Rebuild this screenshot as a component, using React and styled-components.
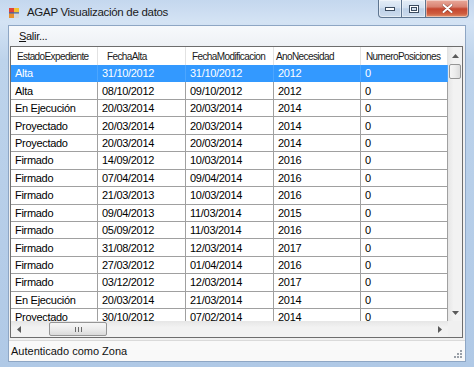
import styled, { createGlobalStyle } from "styled-components";

const GlobalStyle = createGlobalStyle`
  html, body { margin: 0; padding: 0; }
  body { background: #fff; font-family: "Liberation Sans", Arial, sans-serif; }
`;

const COLS = "87px 88px 88px 87px 1fr";

const columns = [
  { title: "EstadoExpediente", pad: 6 },
  { title: "FechaAlta", pad: 9 },
  { title: "FechaModificacion", pad: 6 },
  { title: "AnoNecesidad", pad: 2 },
  { title: "NumeroPosiciones", pad: 5 },
];

const rows = [
  ["Alta", "31/10/2012", "31/10/2012", "2012", "0"],
  ["Alta", "08/10/2012", "09/10/2012", "2012", "0"],
  ["En Ejecución", "20/03/2014", "20/03/2014", "2014", "0"],
  ["Proyectado", "20/03/2014", "20/03/2014", "2014", "0"],
  ["Proyectado", "20/03/2014", "20/03/2014", "2014", "0"],
  ["Firmado", "14/09/2012", "10/03/2014", "2016", "0"],
  ["Firmado", "07/04/2014", "09/04/2014", "2016", "0"],
  ["Firmado", "21/03/2013", "10/03/2014", "2016", "0"],
  ["Firmado", "09/04/2013", "11/03/2014", "2015", "0"],
  ["Firmado", "05/09/2012", "11/03/2014", "2016", "0"],
  ["Firmado", "31/08/2012", "12/03/2014", "2017", "0"],
  ["Firmado", "27/03/2012", "01/04/2014", "2016", "0"],
  ["Firmado", "03/12/2012", "12/03/2014", "2017", "0"],
  ["En Ejecución", "20/03/2014", "21/03/2014", "2014", "0"],
  ["Proyectado", "30/10/2012", "07/02/2014", "2014", "0"],
];

const Frame = styled.div`
  width: 474px;
  height: 367px;
  box-sizing: border-box;
  display: flex;
  flex-direction: column;
  padding: 0 8px 5px 8px;
  overflow: hidden;
  background: linear-gradient(180deg, #c4d7ee 0px, #d4e3f4 22px, #bdd3eb 60px, #b0c9e6 100%);
`;

const TitleBar = styled.div`
  height: 25px;
  display: flex;
  align-items: flex-start;
  flex-shrink: 0;
`;

const AppIcon = styled.svg`
  margin: 8px 0 0 1px;
  flex-shrink: 0;
`;

const Title = styled.div`
  margin: 5px 0 0 8px;
  font-size: 11.5px;
  letter-spacing: -0.3px;
  color: #1b1b1b;
  line-height: 15px;
`;

const Buttons = styled.div`
  margin-left: auto;
  margin-right: -3px;
  display: flex;
  height: 18px;
`;

const CapButton = styled.div`
  width: ${(p) => p.$w}px;
  height: 18px;
  box-sizing: border-box;
  border: 1px solid #5e7590;
  border-top: none;
  border-left: ${(p) => (p.$first ? "1px solid #5e7590" : "none")};
  border-radius: ${(p) => p.$radius};
  display: flex;
  align-items: center;
  justify-content: center;
  background: ${(p) =>
    p.$close
      ? "linear-gradient(180deg, #e9a99b 0%, #d98372 40%, #c5462f 52%, #cf5d3f 80%, #e0906a 100%)"
      : "linear-gradient(180deg, #e4edf7 0%, #d3e1f1 45%, #bed1e8 52%, #cddced 100%)"};
  box-shadow: inset 0 0 0 1px rgba(255, 255, 255, 0.45);
`;

const Client = styled.div`
  flex: 1;
  display: flex;
  flex-direction: column;
  background: #f0f0f0;
  border: 1px solid #8ea6c4;
  min-height: 0;
`;

const MenuBar = styled.div`
  height: 20px;
  flex-shrink: 0;
  display: flex;
  align-items: center;
  padding-left: 10px;
  background: linear-gradient(180deg, #f7f9fc 0%, #eef1f5 100%);
  font-size: 11px;
  letter-spacing: -0.3px;
  color: #111;
`;

const Grid = styled.div`
  height: 292px;
  box-sizing: border-box;
  margin: 0 2px 0 1px;
  border: 1px solid #6d6d6d;
  background: #fff;
  display: flex;
  flex-direction: column;
  flex-shrink: 0;
`;

const GridMain = styled.div`
  flex: 1;
  display: flex;
  min-height: 0;
`;

const Table = styled.div`
  flex: 1;
  display: flex;
  flex-direction: column;
  overflow: hidden;
  font-size: 11px;
  color: #000;
`;

const HeaderRow = styled.div`
  display: grid;
  grid-template-columns: ${COLS};
  height: 18px;
  flex-shrink: 0;
  background: #fff;
`;

const HeaderCell = styled.div`
  display: flex;
  align-items: center;
  padding-left: ${(p) => p.$pad}px;
  border-right: 1px solid #e2e2e2;
  font-size: 10px;
  letter-spacing: -0.6px;
  color: #1a1a1a;
  white-space: nowrap;
  overflow: hidden;
`;

const Row = styled.div`
  display: grid;
  grid-template-columns: ${COLS};
  height: 17.45px;
  flex-shrink: 0;
  background: ${(p) => (p.$selected ? "#3399ff" : "#fff")};
  color: ${(p) => (p.$selected ? "#fff" : "#000")};
`;

const Cell = styled.div`
  box-sizing: border-box;
  display: flex;
  align-items: center;
  padding-left: 4px;
  border-right: 1px solid ${(p) => (p.$selected ? "#4ca6ff" : "#a0a0a0")};
  border-bottom: 1px solid ${(p) => (p.$selected ? "#3399ff" : "#a0a0a0")};
  letter-spacing: -0.3px;
  white-space: nowrap;
  overflow: hidden;
`;

const VScroll = styled.div`
  width: 14px;
  flex-shrink: 0;
  display: flex;
  flex-direction: column;
  background: linear-gradient(90deg, #e6e6e6 0%, #f2f2f2 40%, #f2f2f2 100%);
`;

const ArrowBox = styled.div`
  width: ${(p) => p.$w || 14}px;
  height: ${(p) => p.$h || 17}px;
  flex-shrink: 0;
  display: flex;
  align-items: center;
  justify-content: center;
`;

const VThumb = styled.div`
  height: 15px;
  margin: 0 1px;
  flex-shrink: 0;
  box-sizing: border-box;
  border: 1px solid #959595;
  border-radius: 2px;
  background: linear-gradient(90deg, #f5f5f5 0%, #ececec 50%, #dcdcdc 100%);
`;

const Spacer = styled.div`
  flex: 1;
`;

const HScrollRow = styled.div`
  height: 16px;
  flex-shrink: 0;
  display: flex;
`;

const HScroll = styled.div`
  flex: 1;
  display: flex;
  align-items: stretch;
  background: linear-gradient(180deg, #e6e6e6 0%, #f2f2f2 40%, #f2f2f2 100%);
`;

const HThumb = styled.div`
  width: 58px;
  margin: 1px 0 1px ${(p) => p.$offset}px;
  box-sizing: border-box;
  border: 1px solid #959595;
  border-radius: 2px;
  background: linear-gradient(180deg, #f6f6f6 0%, #ececec 50%, #dadada 100%);
  display: flex;
  align-items: center;
  justify-content: center;
`;

const Corner = styled.div`
  width: 14px;
  background: #f0f0f0;
`;

const StatusBar = styled.div`
  margin-top: 2px;
  flex: 1;
  display: flex;
  align-items: center;
  padding: 0 3px 0 2px;
  border-top: 1px solid #dadada;
  background: #f9f9f9;
  font-size: 11px;
  color: #111;
`;

const Grip = styled.svg`
  margin-left: auto;
  align-self: flex-end;
  margin-bottom: 3px;
`;

const Arrow = ({ dir }) => {
  const pts = {
    up: "0,4 3.5,0 7,4",
    down: "0,0 7,0 3.5,4",
    left: "4,0 4,7 0,3.5",
    right: "0,0 0,7 4,3.5",
  }[dir];
  const horiz = dir === "left" || dir === "right";
  return (
    <svg width={horiz ? 4 : 7} height={horiz ? 7 : 4} viewBox={horiz ? "0 0 4 7" : "0 0 7 4"}>
      <polygon points={pts} fill="#5a5a5a" />
    </svg>
  );
};

export default function App() {
  return (
    <>
      <GlobalStyle />
      <Frame>
        <TitleBar>
          <AppIcon width="10" height="10" viewBox="0 0 10 10">
            <rect x="0" y="0" width="10" height="10" fill="#f3f3f3" />
            <rect x="0" y="0" width="5" height="5" fill="#e0453a" />
            <rect x="5" y="0" width="5" height="5" fill="#f2c230" />
            <rect x="0" y="5" width="5" height="5" fill="#e8912f" />
            <rect x="5" y="5" width="5" height="5" fill="#d7d7d7" />
            <rect x="0" y="4.3" width="10" height="1.2" fill="#3a62b5" />
          </AppIcon>
          <Title>AGAP Visualización de datos</Title>
          <Buttons>
            <CapButton $w={24} $first $radius="0 0 0 4px">
              <svg width="10" height="4" viewBox="0 0 10 4">
                <rect x="0.5" y="0.5" width="9" height="3" fill="#fff" stroke="#3c4c60" />
              </svg>
            </CapButton>
            <CapButton $w={24} $radius="0">
              <svg width="10" height="8" viewBox="0 0 10 8">
                <rect x="0.5" y="0.5" width="9" height="7" fill="#fff" stroke="#3c4c60" />
                <rect x="2.5" y="2.5" width="5" height="3" fill="#d4e1f0" stroke="#3c4c60" />
              </svg>
            </CapButton>
            <CapButton $w={43} $close $radius="0 0 4px 0">
              <svg width="11" height="9" viewBox="0 0 11 9">
                <path d="M1.5 1 L9.5 8 M9.5 1 L1.5 8" stroke="#4a1a12" strokeWidth="3" strokeLinecap="round" opacity="0.5" />
                <path d="M1.5 1 L9.5 8 M9.5 1 L1.5 8" stroke="#fff" strokeWidth="2" strokeLinecap="round" />
              </svg>
            </CapButton>
          </Buttons>
        </TitleBar>
        <Client>
          <MenuBar>
            <span>
              <u>S</u>alir...
            </span>
          </MenuBar>
          <Grid>
            <GridMain>
              <Table>
                <HeaderRow>
                  {columns.map((c) => (
                    <HeaderCell key={c.title} $pad={c.pad}>
                      {c.title}
                    </HeaderCell>
                  ))}
                </HeaderRow>
                {rows.map((r, i) => (
                  <Row key={i} $selected={i === 0}>
                    {r.map((v, j) => (
                      <Cell key={j} $selected={i === 0}>
                        {v}
                      </Cell>
                    ))}
                  </Row>
                ))}
              </Table>
              <VScroll>
                <ArrowBox>
                  <Arrow dir="up" />
                </ArrowBox>
                <VThumb />
                <Spacer />
                <ArrowBox>
                  <Arrow dir="down" />
                </ArrowBox>
              </VScroll>
            </GridMain>
            <HScrollRow>
              <HScroll>
                <ArrowBox $w={16} $h={16}>
                  <Arrow dir="left" />
                </ArrowBox>
                <HThumb $offset={22}>
                  <svg width="7" height="5" viewBox="0 0 7 5">
                    <path d="M0.5 0 V5 M3.5 0 V5 M6.5 0 V5" stroke="#6a6a6a" strokeWidth="1" />
                  </svg>
                </HThumb>
                <Spacer />
                <ArrowBox $w={16} $h={16}>
                  <Arrow dir="right" />
                </ArrowBox>
              </HScroll>
              <Corner />
            </HScrollRow>
          </Grid>
          <StatusBar>
            <span>Autenticado como Zona</span>
            <Grip width="8" height="8" viewBox="0 0 8 8">
              {[
                [6, 0],
                [3, 3],
                [6, 3],
                [0, 6],
                [3, 6],
                [6, 6],
              ].map(([x, y]) => (
                <rect key={`${x}-${y}`} x={x} y={y} width="2" height="2" fill="#9aa0a8" />
              ))}
            </Grip>
          </StatusBar>
        </Client>
      </Frame>
    </>
  );
}
